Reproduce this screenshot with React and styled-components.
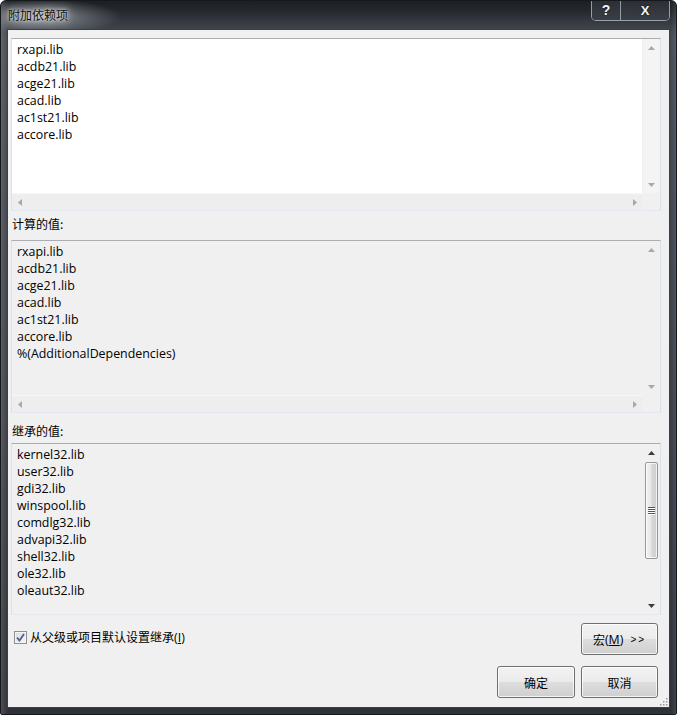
import React from 'react';
import styled, { createGlobalStyle } from 'styled-components';

const GlobalStyle = createGlobalStyle`
    html, body {
        margin: 0;
        padding: 0;
        background: #ffffff;
    }
    body {
        font-family: "Open Sans", "Noto Sans CJK SC", sans-serif;
        font-size: 12.4px;
        color: #000;
    }
`

const Window = styled.div`
    width: 677px;
    height: 715px;
    display: flex;
    flex-direction: column;
    box-sizing: border-box;
    border-radius: 6px 6px 2px 2px;
    overflow: hidden;
    background:
        radial-gradient(ellipse 80px 18px at 40px 16px, rgba(170,175,182,0.75), rgba(150,156,164,0) 100%),
        linear-gradient(to right, rgba(255,255,255,0.14) 0px, rgba(255,255,255,0) 7px, rgba(255,255,255,0) 670px, rgba(170,200,220,0.18) 677px),
        linear-gradient(to bottom, #1c1f24 0px, #25292e 10px, #3a3f46 24px, #474c53 34px, #3b3f46 60%, #2e3238 100%);
    border: 1px solid #16181b;
`

const TitleBar = styled.div`
    height: 28px;
    display: flex;
    justify-content: space-between;
    align-items: flex-start;
`

const Title = styled.div`
    margin: 5px 0 0 7px;
    font-family: "Noto Sans CJK SC", sans-serif;
    font-size: 12px;
    line-height: 17px;
    color: #111;
    text-shadow: 0 0 3px rgba(255,255,255,0.9), 0 0 8px rgba(255,255,255,0.8), 0 0 14px rgba(255,255,255,0.6);
`

const CaptionGroup = styled.div`
    display: flex;
    margin-right: 6px;
    margin-top: -1px;
    border: 1px solid rgba(190,196,204,0.75);
    border-top: none;
    border-radius: 0 0 5px 5px;
    overflow: hidden;
    box-shadow: inset 0 0 0 1px rgba(0,0,0,0.45);
`

const CaptionButton = styled.div`
    width: ${p => p.$w}px;
    height: 20px;
    display: flex;
    align-items: center;
    justify-content: center;
    color: #f4f4f4;
    font-family: "Liberation Sans", sans-serif;
    font-weight: bold;
    font-size: ${p => p.$size}px;
    background: linear-gradient(to bottom, #2b2f35, #3a3e45);
    border-left: ${p => p.$first ? 'none' : '1px solid rgba(190,196,204,0.7)'};
    text-shadow: 0 0 2px rgba(0,0,0,0.8);
`

const Client = styled.div`
    position: relative;
    flex: 1;
    margin: 0 6px 6px 6px;
    background: #f0f0f0;
    border: 1px solid #3c4046;
    padding: 8px 8px 9px 3px;
    display: flex;
    flex-direction: column;
`

const ListBox = styled.div`
    width: 650px;
    height: ${p => p.$h}px;
    box-sizing: border-box;
    display: flex;
    flex-direction: column;
    background: ${p => p.$readonly ? '#f0f0f0' : '#ffffff'};
    border-top: 1px solid #abadb3;
    border-left: 1px solid #dbdfe6;
    border-right: 1px solid #dbdfe6;
    border-bottom: 1px solid #e3e9ef;
`

const ListMain = styled.div`
    flex: 1;
    display: flex;
    min-height: 0;
`

const Lines = styled.div`
    flex: 1;
    padding: 2px 0 0 5px;
`

const Line = styled.div`
    height: 17px;
    line-height: 17px;
    white-space: nowrap;
`

const VScroll = styled.div`
    width: 17px;
    display: flex;
    flex-direction: column;
    align-items: center;
    background: ${p => p.$readonly ? '#f0f0f0' : '#f4f4f4'};
    border-left: 1px solid #f0f0f0;
`

const HScrollRow = styled.div`
    height: 17px;
    display: flex;
    background: #f0f0f0;
`

const HScroll = styled.div`
    flex: 1;
    display: flex;
    align-items: center;
    justify-content: space-between;
    padding: 0 6px;
    background: #eeeeee;
    border-top: 1px solid #f6f6f6;
`

const Corner = styled.div`
    width: 17px;
    background: #f0f0f0;
`

const ArrowBox = styled.div`
    width: 17px;
    height: 17px;
    display: flex;
    align-items: center;
    justify-content: center;
    flex-shrink: 0;
`

const Track = styled.div`
    flex: 1;
    width: 17px;
    display: flex;
    flex-direction: column;
    align-items: center;
`

const Thumb = styled.div`
    width: 13px;
    height: 97px;
    margin-top: 1px;
    box-sizing: border-box;
    border: 1px solid #979797;
    border-radius: 2px;
    background: linear-gradient(to right, #f4f4f4 0%, #e6e6e6 45%, #d6d6d6 55%, #cfcfcf 100%);
    box-shadow: inset 0 0 0 1px rgba(255,255,255,0.7);
    display: flex;
    flex-direction: column;
    align-items: center;
    justify-content: center;
    gap: 1px;
`

const Grip = styled.div`
    width: 7px;
    height: 1px;
    background: #555;
    box-shadow: 0 1px 0 #fff;
`

const FieldLabel = styled.div`
    margin: ${p => p.$mt}px 0 ${p => p.$mb}px 1px;
    font-family: "Noto Sans CJK SC", sans-serif;
    font-size: 12px;
    height: 17px;
    line-height: 17px;
`

const OptionRow = styled.div`
    margin-top: 8px;
    display: flex;
    justify-content: space-between;
    align-items: flex-start;
    width: 647px;
`

const CheckLabel = styled.label`
    display: flex;
    align-items: center;
    gap: 3px;
    margin: 5px 0 0 3px;
    font-family: "Noto Sans CJK SC", sans-serif;
    font-size: 12px;
    line-height: 17px;
`

const CheckBox = styled.span`
    width: 13px;
    height: 13px;
    box-sizing: border-box;
    border: 1px solid #8e8f8f;
    background: linear-gradient(135deg, #dcdcdc, #f6f6f6);
    box-shadow: inset 0 0 0 1px #f4f4f4;
    display: flex;
    align-items: center;
    justify-content: center;
`

const ButtonRow = styled.div`
    margin-top: 11px;
    display: flex;
    justify-content: flex-end;
    gap: 6px;
    width: 647px;
`

const Button = styled.div`
    width: ${p => p.$w || 78}px;
    height: 32px;
    box-sizing: border-box;
    border: 1px solid #707070;
    border-radius: 3px;
    background: linear-gradient(to bottom, #f2f2f2 0%, #ebebeb 50%, #dddddd 51%, #cfcfcf 100%);
    box-shadow: inset 0 0 0 1px rgba(255,255,255,0.75);
    display: flex;
    align-items: center;
    justify-content: center;
    font-family: "Noto Sans CJK SC", sans-serif;
    font-size: 12px;
`

const Latin = styled.span`
    font-family: "Open Sans", sans-serif;
    font-size: 12.4px;
`

const Mnemonic = styled.span`
    text-decoration: underline;
`

const Chevrons = styled.span`
    margin-left: 7px;
    font-family: "Liberation Sans", sans-serif;
    font-size: 10px;
    letter-spacing: 2px;
`

const SizeGrip = styled.svg`
    position: absolute;
    right: 1px;
    bottom: 1px;
`

const Arrow = ({ dir, color }) => {
    const pts = {
        up: '0,4 3.5,0 7,4',
        down: '0,0 3.5,4 7,0',
        left: '4,0 0,3.5 4,7',
        right: '0,0 4,3.5 0,7',
    }[dir];
    const vertical = dir === 'up' || dir === 'down';
    return (
        <svg width={vertical ? 7 : 4} height={vertical ? 4 : 7}>
            <polygon points={pts} fill={color} />
        </svg>
    );
};

const List = ({ items, height, readonly, hscroll, thumb }) => {
    const arrowColor = thumb ? '#3c3c3c' : '#a8a8a8';
    return (
        <ListBox $h={height} $readonly={readonly}>
            <ListMain>
                <Lines>
                    {items.map(i => <Line key={i}>{i}</Line>)}
                </Lines>
                <VScroll $readonly={readonly}>
                    <ArrowBox><Arrow dir="up" color={arrowColor} /></ArrowBox>
                    <Track>
                        {thumb && (
                            <Thumb>
                                <Grip /><Grip /><Grip /><Grip />
                            </Thumb>
                        )}
                    </Track>
                    <ArrowBox><Arrow dir="down" color={arrowColor} /></ArrowBox>
                </VScroll>
            </ListMain>
            {hscroll && (
                <HScrollRow>
                    <HScroll>
                        <Arrow dir="left" color="#a8a8a8" />
                        <Arrow dir="right" color="#a8a8a8" />
                    </HScroll>
                    <Corner />
                </HScrollRow>
            )}
        </ListBox>
    );
};

const userLibs = ['rxapi.lib', 'acdb21.lib', 'acge21.lib', 'acad.lib', 'ac1st21.lib', 'accore.lib'];
const inherited = ['kernel32.lib', 'user32.lib', 'gdi32.lib', 'winspool.lib', 'comdlg32.lib', 'advapi32.lib', 'shell32.lib', 'ole32.lib', 'oleaut32.lib'];

const App = () => {
    return (
        <>
            <GlobalStyle />
            <Window>
                <TitleBar>
                    <Title>附加依赖项</Title>
                    <CaptionGroup>
                        <CaptionButton $w={28} $size={14} $first>?</CaptionButton>
                        <CaptionButton $w={48} $size={13}>X</CaptionButton>
                    </CaptionGroup>
                </TitleBar>
                <Client>
                    <List items={userLibs} height={173} hscroll />
                    <FieldLabel $mt={4} $mb={8}>计算的值:</FieldLabel>
                    <List items={[...userLibs, '%(AdditionalDependencies)']} height={173} readonly hscroll />
                    <FieldLabel $mt={9} $mb={4}>继承的值:</FieldLabel>
                    <List items={inherited} height={172} readonly thumb />
                    <OptionRow>
                        <CheckLabel>
                            <CheckBox>
                                <svg width="9" height="9" viewBox="0 0 9 9">
                                    <path d="M1 4.5 L3.5 7.5 L8 1" stroke="#4a5f8a" strokeWidth="1.8" fill="none" />
                                </svg>
                            </CheckBox>
                            <span>从父级或项目默认设置继承<Latin>(<Mnemonic>I</Mnemonic>)</Latin></span>
                        </CheckLabel>
                        <Button $w={77}>宏<Latin>(<Mnemonic>M</Mnemonic>)</Latin><Chevrons>&gt;&gt;</Chevrons></Button>
                    </OptionRow>
                    <ButtonRow>
                        <Button>确定</Button>
                        <Button $w={77}>取消</Button>
                    </ButtonRow>
                    <SizeGrip width="10" height="10" viewBox="0 0 10 10">
                        {[[8, 2], [8, 5], [5, 5], [8, 8], [5, 8], [2, 8]].map(([x, y]) => (
                            <rect key={x + '-' + y} x={x} y={y} width="1.5" height="1.5" fill="#9a9a9a" />
                        ))}
                    </SizeGrip>
                </Client>
            </Window>
        </>
    );
};

export default App;
